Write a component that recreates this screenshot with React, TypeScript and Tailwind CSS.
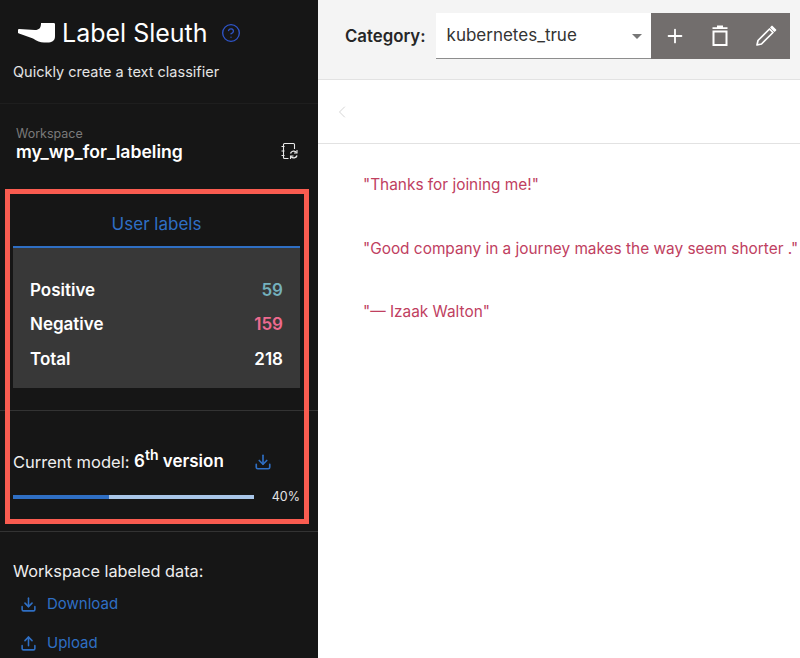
import { ChevronLeft, CircleHelp, Download, Plus, Upload } from "lucide-react";

function Logo() {
  return (
    <svg width="37" height="20" viewBox="0 0 37 20" className="shrink-0">
      <path d="M0 6.5 L1 6 L17 7 C21 7 23 5 23 0 L36 0 C37 0 37 1 37 2 L37 13 C37 17 35 19 31 19.5 L26 19.5 C22 19.5 19 18 15 15.5 L1 10.5 L0 10 Z" fill="#fff" />
    </svg>
  );
}

function WorkspaceIcon() {
  return (
    <svg width="19" height="18" viewBox="0 0 18 18" fill="none" stroke="#e8e8e8" strokeWidth="1.1" className="shrink-0">
      <path d="M14 7V2.5A1 1 0 0 0 13 1.5H4A1 1 0 0 0 3 2.5V15.5A1 1 0 0 0 4 16.5H8" />
      <path d="M1 4.5H4M1 9H4M1 13.5H4" />
      <path d="M10 11.5a3.4 3.4 0 0 1 6-1M16.5 13.5a3.4 3.4 0 0 1-6 1" strokeWidth="1.4" />
      <path d="M16.5 8v3h-3M10 17v-3h3" />
    </svg>
  );
}

function TrashIcon() {
  return (
    <svg width="22" height="22" viewBox="0 0 22 22" fill="none" stroke="#fff" strokeWidth="2" className="shrink-0">
      <path d="M4.5 6.5H17.5V20H4.5Z" />
      <path d="M3.5 3.2H18.5M8 1.5H14" strokeWidth="1.8" />
    </svg>
  );
}

function EditIcon() {
  return (
    <svg width="22" height="22" viewBox="0 0 22 22" fill="none" stroke="#fff" strokeWidth="1.7" strokeLinejoin="round" className="shrink-0">
      <path d="M2 20L3 15.5L14.5 4L18 7.5L6.5 19Z" />
      <path d="M16 2.5L17 1.5L20.5 5L19.5 6Z" fill="#fff" />
    </svg>
  );
}

function StatRow({ label, value, color }: { label: string; value: number; color: string }) {
  return (
    <div className="flex h-[34.5px] items-center justify-between">
      <span className="font-semibold text-white">{label}</span>
      <span className={`font-semibold ${color}`}>{value}</span>
    </div>
  );
}

export default function App() {
  return (
    <div className="relative flex h-[658px] w-[800px] overflow-hidden bg-white font-['Inter',sans-serif]">
      <aside className="flex w-[318px] shrink-0 flex-col bg-[#161616] text-white">
        <div className="h-[104px] shrink-0 border-b border-[#1e1e1e] px-[13px] pt-[18px]">
          <div className="flex h-[30px] items-center pl-[5px]">
            <Logo />
            <span className="ml-[7px] text-[25px] leading-none text-white">Label Sleuth</span>
            <CircleHelp size={20} strokeWidth={1.6} className="ml-[13px] text-[#2f55c9]" />
          </div>
          <p className="mt-[15px] text-[14.5px] leading-[18px] text-[#e4e4e4]">Quickly create a text classifier</p>
        </div>

        <div className="flex h-[84px] shrink-0 items-start justify-between pl-[16px] pr-[19px] pt-[22px]">
          <div>
            <div className="pt-[1px] text-[12.5px] leading-[14px] text-[#7a7a7a]">Workspace</div>
            <div className="text-[17.6px] font-semibold leading-[22px] text-white">my_wp_for_labeling</div>
          </div>
          <div className="pt-[16px]">
            <WorkspaceIcon />
          </div>
        </div>

        <div className="h-[223px] shrink-0 border-b border-[#333] pl-[13px] pr-[18px]">
          <div className="flex h-[60px] items-center justify-center border-b-2 border-[#2f6fc4] pt-[15px] text-[17px] text-[#2f6fc4]">
            User labels
          </div>
          <div className="h-[140px] bg-[#383838] pl-[17px] pr-[17px] pt-[25px] text-[17px]">
            <StatRow label="Positive" value={59} color="text-[#74b0bd]" />
            <StatRow label="Negative" value={159} color="text-[#ee6a8f]" />
            <StatRow label="Total" value={218} color="text-white" />
          </div>
        </div>

        <div className="h-[121px] shrink-0 border-b border-[#333] pl-[13px] pr-[18px] pt-[34px]">
          <div className="flex h-[34px] items-center text-[16.5px] text-[#eeeeee]">
            <span>Current model:&nbsp;</span>
            <span className="text-[17px] font-semibold text-white">
              6<sup className="text-[14px]">th</sup> version
            </span>
            <Download size={18} strokeWidth={2.2} className="ml-[30px] text-[#2f6fc4]" />
          </div>
          <div className="mt-[9px] flex items-center">
            <div className="flex h-[4px] w-[241px]">
              <div className="w-[40%] bg-[#2f6fc4]" />
              <div className="flex-1 bg-[#a9c6e8]" />
            </div>
            <span className="ml-auto text-[12.5px] text-[#e4e4e4]">40%</span>
          </div>
        </div>

        <div className="flex-1 pl-[13px] pt-[28px]">
          <div className="text-[16.3px] leading-[22px] text-[#eeeeee]">Workspace labeled data:</div>
          <div className="mt-[10px] flex h-[24px] items-center pl-[7px] text-[15px] text-[#2f6fc4]">
            <Download size={17} strokeWidth={2.2} />
            <span className="ml-[10px]">Download</span>
          </div>
          <div className="mt-[15px] flex h-[24px] items-center pl-[7px] text-[15px] text-[#2f6fc4]">
            <Upload size={17} strokeWidth={2.2} />
            <span className="ml-[10px]">Upload</span>
          </div>
        </div>
      </aside>

      <main className="flex min-w-0 flex-1 flex-col">
        <header className="flex h-[80px] shrink-0 items-center border-b border-[#e2e2e2] bg-[#f4f4f4] pb-[7px] pl-[27px]">
          <span className="pt-[2px] text-[16.8px] font-semibold text-[#262626]">Category:</span>
          <div className="ml-[10px] flex h-[46px] w-[215px] items-center justify-between border-b border-[#8d8d8d] bg-white pl-[11px] pr-[9px] pt-[1px] text-[17px] text-[#333]">
            <span>kubernetes_true</span>
            <span className="h-0 w-0 border-x-[5px] border-t-[5px] border-x-transparent border-t-[#777]" />
          </div>
          <div className="flex h-[46px] w-[139px] items-center justify-between bg-[#726e6d] pl-[13px] pr-[13px] text-white">
            <Plus size={22} strokeWidth={2} />
            <TrashIcon />
            <EditIcon />
          </div>
        </header>

        <div className="flex h-[64px] shrink-0 items-center border-b border-[#e2e2e2] pl-[14px]">
          <ChevronLeft size={20} strokeWidth={1.2} className="text-[#d5d5d5]" />
        </div>

        <div className="flex flex-col gap-[42.5px] whitespace-nowrap pl-[45px] pt-[30px] text-[15.4px] leading-[21px] text-[#c0405f]">
          <p>"Thanks for joining me!"</p>
          <p>"Good company in a journey makes the way seem shorter ."</p>
          <p>"— Izaak Walton"</p>
        </div>
      </main>

      <div className="pointer-events-none absolute left-[5px] top-[189px] h-[335px] w-[304px] border-[5px] border-[#fa5c50]" />
    </div>
  );
}
